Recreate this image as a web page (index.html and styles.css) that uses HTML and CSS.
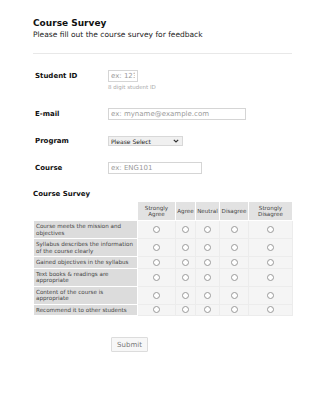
FILE: index.html
```html
<!DOCTYPE html>
<html lang="en">
<head>
    <meta charset="UTF-8">
    <meta name="viewport" content="width=device-width, initial-scale=1.0">
    <title>Course Survey</title>
    <link rel="stylesheet" href="styles.css">
</head>
<body>
    <div class="form-wrap">
        <div class="form-header">
            <h1>Course Survey</h1>
            <p>Please fill out the course survey for feedback</p>
        </div>

        <div class="field field-id">
            <label class="field-label">Student ID</label>
            <div class="field-input">
                <input type="text" class="text-input short" placeholder="ex: 12345678">
                <div class="hint">8 digit student ID</div>
            </div>
        </div>

        <div class="field field-email">
            <label class="field-label">E-mail</label>
            <div class="field-input">
                <input type="text" class="text-input wide" placeholder="ex: myname@example.com">
            </div>
        </div>

        <div class="field field-program">
            <label class="field-label">Program</label>
            <div class="field-input">
                <div class="select-box">
                    <select class="dropdown">
                        <option>Please Select</option>
                    </select>
                    <svg class="chevron" width="6" height="4" viewBox="0 0 6 4">
                        <path d="M0.8 0.8 L3 3 L5.2 0.8" fill="none" stroke="#333" stroke-width="1.2"/>
                    </svg>
                </div>
            </div>
        </div>

        <div class="field field-course">
            <label class="field-label">Course</label>
            <div class="field-input">
                <input type="text" class="text-input medium" placeholder="ex: ENG101">
            </div>
        </div>

        <h2 class="matrix-title">Course Survey</h2>

        <table class="matrix">
            <colgroup>
                <col class="c-q">
                <col class="c-sa">
                <col class="c-a">
                <col class="c-n">
                <col class="c-d">
                <col class="c-sd">
            </colgroup>
            <thead>
                <tr>
                    <th class="blank"></th>
                    <th>Strongly<br>Agree</th>
                    <th>Agree</th>
                    <th>Neutral</th>
                    <th>Disagree</th>
                    <th>Strongly<br>Disagree</th>
                </tr>
            </thead>
            <tbody id="matrix-body"></tbody>
        </table>

        <div class="actions">
            <button class="submit-btn">Submit</button>
        </div>
    </div>

    <script>
        // Survey questions
        const questions = [
            'Course meets the mission and objectives',
            'Syllabus describes the information of the course clearly',
            'Gained objectives in the syllabus',
            'Text books &amp; readings are appropriate',
            'Content of the course is appropriate',
            'Recommend it to other students'
        ];

        const body = document.getElementById('matrix-body');
        questions.forEach((q, i) => {
            const row = document.createElement('tr');
            let html = `<td class="question">${q}</td>`;
            for (let c = 0; c < 5; c++) {
                html += `<td class="answer"><input type="radio" class="radio" name="q${i}"></td>`;
            }
            row.innerHTML = html;
            body.appendChild(row);
        });
    </script>
</body>
</html>
```

FILE: styles.css
```css
body {
    margin: 0;
    font-family: "DejaVu Sans", Verdana, sans-serif;
    background-color: #fff;
    color: #000;
}
.form-wrap {
    width: 259px;
    padding-left: 33px;
}
.form-header {
    padding-top: 17px;
    padding-bottom: 13px;
    border-bottom: 1px solid #e8e8e8;
}
.form-header h1 {
    margin: 0;
    font-size: 9px;
    line-height: 12px;
    font-weight: bold;
    color: #111;
}
.form-header p {
    margin: 0;
    font-size: 7.5px;
    line-height: 11px;
    color: #222;
}
.field {
    display: flex;
    align-items: flex-start;
}
.field-label {
    width: 73px;
    padding-left: 2px;
    font-size: 7px;
    font-weight: bold;
    line-height: 12px;
    color: #111;
}
.field-input {
    font-size: 7px;
    line-height: 12px;
}
.field-id {
    margin-top: 16px;
}
.field-email {
    margin-top: 17px;
}
.field-program {
    margin-top: 16px;
}
.field-program .field-label {
    line-height: 10px;
}
.field-course {
    margin-top: 16px;
}
.text-input {
    display: block;
    box-sizing: border-box;
    height: 12px;
    margin: 0;
    padding: 0 2px;
    border: 1px solid #d5d5d5;
    font-family: "DejaVu Sans", Verdana, sans-serif;
    font-size: 7px;
    color: #333;
    outline: none;
}
.text-input::placeholder {
    color: #9a9a9a;
}
.short {
    width: 30px;
}
.wide {
    width: 138px;
}
.medium {
    width: 94px;
}
.hint {
    margin-top: 1px;
    font-size: 5.5px;
    line-height: 8px;
    color: #aaa;
}
.select-box {
    position: relative;
    width: 75px;
    height: 10px;
}
.dropdown {
    display: block;
    appearance: none;
    box-sizing: border-box;
    width: 75px;
    height: 10px;
    margin: 0;
    padding: 0 2px;
    border: 1px solid #d8d8d8;
    border-radius: 0;
    background-color: #f0f0f0;
    font-family: "DejaVu Sans", Verdana, sans-serif;
    font-size: 6px;
    color: #222;
}
.chevron {
    position: absolute;
    right: 4px;
    top: 3px;
}
.matrix-title {
    margin: 16px 0 2px 0;
    font-size: 7px;
    line-height: 9px;
    font-weight: bold;
    color: #111;
}
.matrix {
    width: 259px;
    border-collapse: collapse;
    table-layout: fixed;
    font-size: 5.6px;
    line-height: 6.5px;
    color: #444;
}
.c-q { width: 104px; }
.c-sa { width: 38px; }
.c-a { width: 20px; }
.c-n { width: 24px; }
.c-d { width: 29px; }
.c-sd { width: 44px; }
.matrix th,
.matrix td {
    border: 1px solid #fff;
    padding: 2px 1px;
}
.matrix th {
    background-color: #e2e2e2;
    font-weight: normal;
    text-align: center;
    padding: 2.5px 0;
}
.matrix th.blank {
    background-color: #fff;
}
.matrix td.question {
    background-color: #dcdcdc;
    padding: 2px 4px 2px 2px;
}
.matrix td.answer {
    background-color: #f5f5f5;
    border-color: #ececec;
    text-align: center;
    padding: 1px;
}
.radio {
    display: inline-block;
    appearance: none;
    width: 7px;
    height: 7px;
    margin: 0;
    border: 1px solid #999;
    border-radius: 50%;
    background-color: #fff;
    vertical-align: middle;
}
.actions {
    margin-top: 21px;
    padding-left: 78px;
}
.submit-btn {
    display: block;
    box-sizing: border-box;
    width: 37px;
    height: 15px;
    padding: 0;
    border: 1px solid #dcdcdc;
    border-radius: 1px;
    background-color: #f7f7f7;
    font-family: "DejaVu Sans", Verdana, sans-serif;
    font-size: 7px;
    color: #777;
}
```
